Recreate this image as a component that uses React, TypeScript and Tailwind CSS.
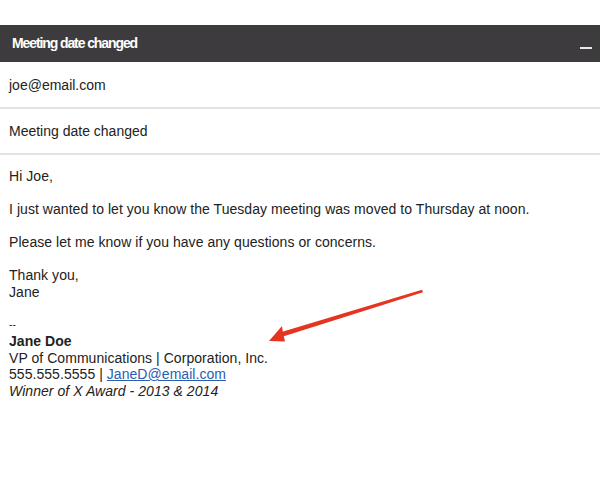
import React from 'react'

export default function App() {
  return (
    <div className="relative w-[600px] h-[500px] bg-white pt-[25px] text-[#222] font-['Liberation_Sans',Arial,sans-serif]">
      {/* Header */}
      <div className="flex items-center justify-between h-[37px] bg-[#3e3b3e] pl-[12px] pr-[8px]">
        <span className="text-[14px] font-bold tracking-[-1.1px] text-white">Meeting date changed</span>
        <span className="block w-[12px] h-[2px] bg-[#e8e8e8] mt-[8px]"></span>
      </div>

      {/* To */}
      <div className="flex items-center h-[47px] pl-[9px] pt-[1px] text-[14px] border-b-2 border-[#e2e2e2]">
        joe@email.com
      </div>

      {/* Subject */}
      <div className="flex items-center h-[46px] pl-[9px] text-[14px] border-b-2 border-[#e2e2e2]">
        Meeting date changed
      </div>

      {/* Body */}
      <div className="pl-[9px] pt-[13px] text-[14px] leading-[16.5px] tracking-[0.05px]">
        <p>Hi Joe,</p>
        <p className="mt-[16.5px]">I just wanted to let you know the Tuesday meeting was moved to Thursday at noon.</p>
        <p className="mt-[16.5px]">Please let me know if you have any questions or concerns.</p>
        <p className="mt-[16.5px]">Thank you,<br />Jane</p>
        <div className="mt-[16.5px]">
          <div className="text-[10px]">--</div>
          <div className="font-bold">Jane Doe</div>
          <div>VP of Communications | Corporation, Inc.</div>
          <div>
            555.555.5555 | <span className="text-[#2a5db0] underline">JaneD@email.com</span>
          </div>
          <div className="italic">Winner of X Award - 2013 &amp; 2014</div>
        </div>
      </div>

      {/* Arrow */}
      <svg className="absolute left-0 top-0 pointer-events-none" width="600" height="500">
        <polygon points="422,289.8 423,292.2 283,336.5 281.5,332" fill="#e5341f" />
        <polygon points="269,341 282,326 283,333 285,341.5" fill="#e5341f" />
      </svg>
    </div>
  )
}
